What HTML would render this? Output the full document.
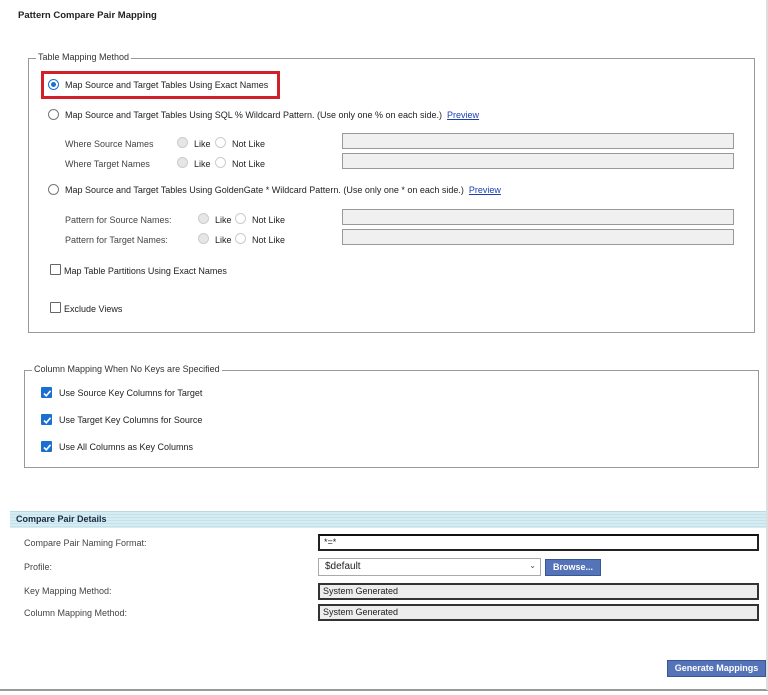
<!DOCTYPE html>
<html><head><meta charset="utf-8"><style>
*{margin:0;padding:0;box-sizing:border-box}
body{width:768px;height:695px;background:#fff;position:relative;overflow:hidden;font-family:"Liberation Sans",sans-serif;font-size:9px;color:#222}
.a{position:absolute;white-space:nowrap}
.box{position:absolute;border:1px solid #999}
.leg{position:absolute;background:#fff;padding:0 2px;color:#333}
.rad{position:absolute;width:11px;height:11px;border-radius:50%;border:1px solid #777;background:#fff}
.rad.on{border-color:#1a6fd0}
.rad.on::after{content:"";position:absolute;left:2px;top:2px;width:5px;height:5px;border-radius:50%;background:#1a6fd0}
.rad.dis{border-color:#ccc;background:#e6e6e6}
.rad.dis2{border-color:#ccc}
.cb{position:absolute;width:11px;height:11px;border:1px solid #666;background:#fff;border-radius:1px}
.cb.on{background:#1a6fd0;border-color:#1a6fd0}
.cb svg{position:absolute;left:0;top:0}
.inp{position:absolute;border:1px solid #999;background:#f0f0f0}
.lbl{color:#444}
a{color:#1a3fb0;text-decoration:underline}
.btn{position:absolute;background:#5473b8;color:#fff;font-weight:bold;font-size:9px;text-align:center;border:1px solid #3a5594}
</style></head><body>
<div class="a" style="left:18px;top:10px;font-weight:bold;font-size:9.5px">Pattern Compare Pair Mapping</div>

<div class="box" style="left:28px;top:58px;width:727px;height:275px"></div>
<div class="leg" style="left:36px;top:52px">Table Mapping Method</div>
<div class="a" style="left:41px;top:71px;width:239px;height:28px;border:3px solid #d0202a"></div>
<div class="rad on" style="left:48px;top:79px"></div>
<div class="a" style="left:65px;top:80px">Map Source and Target Tables Using Exact Names</div>

<div class="rad" style="left:48px;top:109px"></div>
<div class="a" style="left:65px;top:110px">Map Source and Target Tables Using SQL % Wildcard Pattern. (Use only one % on each side.) &nbsp;<a>Preview</a></div>
<div class="a lbl" style="left:65px;top:139px">Where Source Names</div>
<div class="rad dis" style="left:177px;top:137px"></div><div class="a" style="left:194px;top:139px">Like</div>
<div class="rad dis2" style="left:215px;top:137px"></div><div class="a" style="left:232px;top:139px">Not Like</div>
<div class="inp" style="left:342px;top:133px;width:392px;height:16px"></div>
<div class="a lbl" style="left:65px;top:159px">Where Target Names</div>
<div class="rad dis" style="left:177px;top:157px"></div><div class="a" style="left:194px;top:159px">Like</div>
<div class="rad dis2" style="left:215px;top:157px"></div><div class="a" style="left:232px;top:159px">Not Like</div>
<div class="inp" style="left:342px;top:153px;width:392px;height:16px"></div>

<div class="rad" style="left:48px;top:184px"></div>
<div class="a" style="left:65px;top:185px">Map Source and Target Tables Using GoldenGate * Wildcard Pattern. (Use only one * on each side.) &nbsp;<a>Preview</a></div>
<div class="a lbl" style="left:65px;top:215px">Pattern for Source Names:</div>
<div class="rad dis" style="left:198px;top:213px"></div><div class="a" style="left:215px;top:215px">Like</div>
<div class="rad dis2" style="left:235px;top:213px"></div><div class="a" style="left:252px;top:215px">Not Like</div>
<div class="inp" style="left:342px;top:209px;width:392px;height:16px"></div>
<div class="a lbl" style="left:65px;top:235px">Pattern for Target Names:</div>
<div class="rad dis" style="left:198px;top:233px"></div><div class="a" style="left:215px;top:235px">Like</div>
<div class="rad dis2" style="left:235px;top:233px"></div><div class="a" style="left:252px;top:235px">Not Like</div>
<div class="inp" style="left:342px;top:229px;width:392px;height:16px"></div>

<div class="cb" style="left:50px;top:264px"></div><div class="a" style="left:64px;top:266px">Map Table Partitions Using Exact Names</div>
<div class="cb" style="left:50px;top:302px"></div><div class="a" style="left:64px;top:304px">Exclude Views</div>

<div class="box" style="left:24px;top:370px;width:735px;height:98px"></div>
<div class="leg" style="left:32px;top:364px">Column Mapping When No Keys are Specified</div>
<div class="cb on" style="left:41px;top:387px"><svg width="11" height="11"><path d="M2 5.5 L4.3 7.8 L8.5 2.8" stroke="#fff" stroke-width="1.6" fill="none"/></svg></div><div class="a" style="left:59px;top:388px">Use Source Key Columns for Target</div>
<div class="cb on" style="left:41px;top:414px"><svg width="11" height="11"><path d="M2 5.5 L4.3 7.8 L8.5 2.8" stroke="#fff" stroke-width="1.6" fill="none"/></svg></div><div class="a" style="left:59px;top:415px">Use Target Key Columns for Source</div>
<div class="cb on" style="left:41px;top:441px"><svg width="11" height="11"><path d="M2 5.5 L4.3 7.8 L8.5 2.8" stroke="#fff" stroke-width="1.6" fill="none"/></svg></div><div class="a" style="left:59px;top:442px">Use All Columns as Key Columns</div>

<div class="a" style="left:10px;top:511px;width:756px;height:17px;background:repeating-linear-gradient(#d6ecf3 0 2px,#c4e2ec 2px 3px);border-top:1px solid #b8d8e4"></div>
<div class="a" style="left:16px;top:514px;font-weight:bold;font-size:9px;color:#1a2a40">Compare Pair Details</div>

<div class="a lbl" style="left:24px;top:538px">Compare Pair Naming Format:</div>
<div class="a" style="left:318px;top:534px;width:441px;height:17px;border:2px solid #222;border-top-color:#111;padding:1px 4px;font-size:9px">*=*</div>
<div class="a lbl" style="left:24px;top:562px">Profile:</div>
<div class="a" style="left:318px;top:558px;width:223px;height:18px;border:1px solid #aaa;padding:2px 6px;font-size:10px">$default<span style="position:absolute;right:4px;top:2px;font-size:8px;color:#555">&#8964;</span></div>
<div class="btn" style="left:545px;top:559px;width:56px;height:17px;line-height:15px">Browse...</div>
<div class="a lbl" style="left:24px;top:586px">Key Mapping Method:</div>
<div class="a" style="left:318px;top:583px;width:441px;height:17px;border:2px solid #333;background:#ededed;padding:1px 3px;font-size:9px">System Generated</div>
<div class="a lbl" style="left:24px;top:608px">Column Mapping Method:</div>
<div class="a" style="left:318px;top:604px;width:441px;height:17px;border:2px solid #333;background:#ededed;padding:1px 3px;font-size:9px">System Generated</div>

<div class="btn" style="left:667px;top:660px;width:99px;height:17px;line-height:15px">Generate Mappings</div>
<div class="a" style="left:0;top:689px;width:768px;height:2px;background:#999"></div>
<div class="a" style="left:766px;top:0;width:2px;height:690px;background:#ddd"></div>
</body></html>
